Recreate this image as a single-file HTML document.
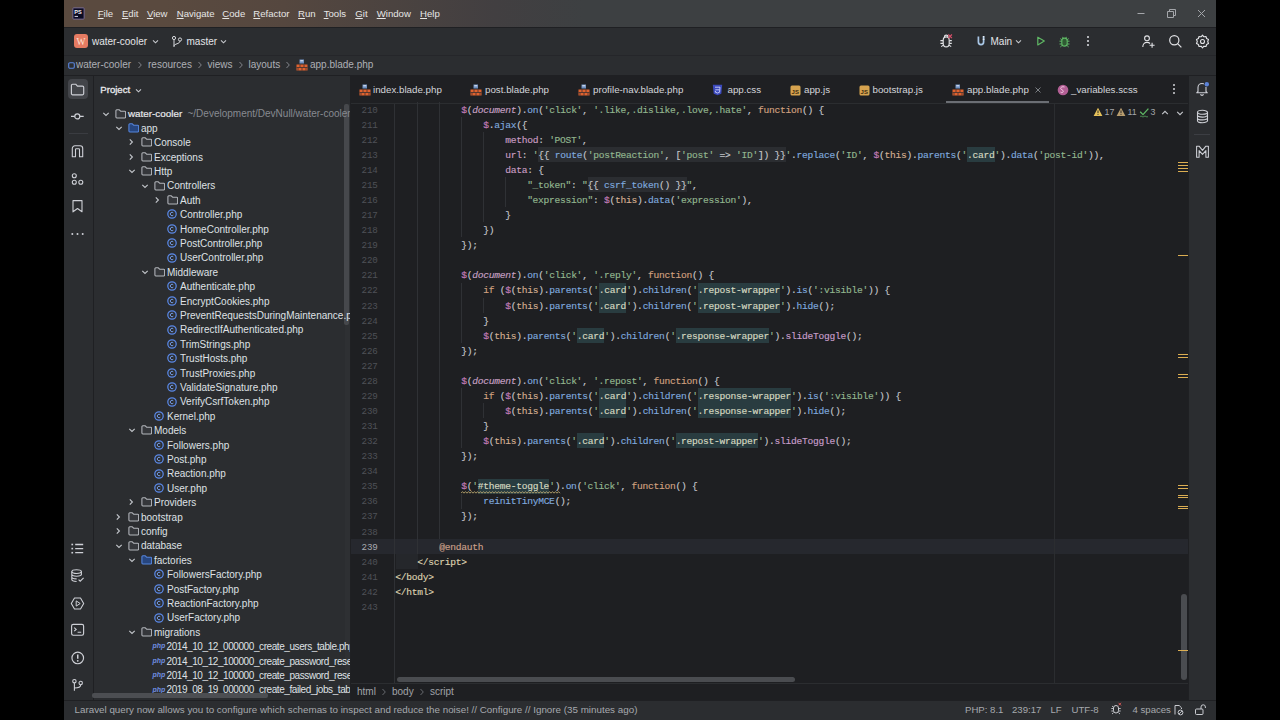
<!DOCTYPE html><html><head><meta charset="utf-8"><style>
html,body{margin:0;padding:0;background:#000;}
body{width:1280px;height:720px;position:relative;overflow:hidden;font-family:"Liberation Sans", sans-serif;}
.m{font-family:"Liberation Mono", monospace;}
</style></head><body>
<div style="position:absolute;left:64px;top:0px;width:1152px;height:720px;background:#2b2d30;"></div>
<div style="position:absolute;left:64px;top:0;width:1152px;height:27px;background:linear-gradient(90deg,#5a4a3f 0px,#5a4a3f 100px,#55473f 220px,#4b4340 330px,#423f41 430px,#3d4042 520px,#3d4042 1152px);"></div>
<div style="position:absolute;left:64px;top:27px;width:1152px;height:1px;background:#1f2023;"></div>
<div style="position:absolute;left:64px;top:28px;width:1152px;height:27px;background:#2b2d30;"></div>
<div style="position:absolute;left:64px;top:55px;width:1152px;height:1px;background:#25262a;"></div>
<div style="position:absolute;left:64px;top:56px;width:1152px;height:20px;background:#2b2d30;"></div>
<div style="position:absolute;left:64px;top:75px;width:1152px;height:1px;background:#1f2023;"></div>
<svg style="position:absolute;left:71.5px;top:6.5px;" width="13" height="13" viewBox="0 0 13 13" fill="none"><rect x="0.9" y="0.9" width="11.2" height="11.2" rx="0.8" fill="#0c0b22" stroke="#7f73a3" stroke-width="0.85"/><text x="2.3" y="7" font-family="Liberation Sans" font-weight="bold" font-size="5.6" fill="#f2f0f8">PS</text><rect x="2.6" y="8.9" width="3.4" height="1" fill="#d8d6e6"/></svg>
<div style="position:absolute;left:97.7px;top:6.00px;height:16px;line-height:16px;font-size:9.6px;color:#e6e6e6;white-space:pre;"><span style="text-decoration:underline;text-underline-offset:0.8px;text-decoration-thickness:0.8px">F</span>ile</div>
<div style="position:absolute;left:121.9px;top:6.00px;height:16px;line-height:16px;font-size:9.6px;color:#e6e6e6;white-space:pre;"><span style="text-decoration:underline;text-underline-offset:0.8px;text-decoration-thickness:0.8px">E</span>dit</div>
<div style="position:absolute;left:146.9px;top:6.00px;height:16px;line-height:16px;font-size:9.6px;color:#e6e6e6;white-space:pre;"><span style="text-decoration:underline;text-underline-offset:0.8px;text-decoration-thickness:0.8px">V</span>iew</div>
<div style="position:absolute;left:176.7px;top:6.00px;height:16px;line-height:16px;font-size:9.6px;color:#e6e6e6;white-space:pre;"><span style="text-decoration:underline;text-underline-offset:0.8px;text-decoration-thickness:0.8px">N</span>avigate</div>
<div style="position:absolute;left:222.3px;top:6.00px;height:16px;line-height:16px;font-size:9.6px;color:#e6e6e6;white-space:pre;"><span style="text-decoration:underline;text-underline-offset:0.8px;text-decoration-thickness:0.8px">C</span>ode</div>
<div style="position:absolute;left:253.3px;top:6.00px;height:16px;line-height:16px;font-size:9.6px;color:#e6e6e6;white-space:pre;"><span style="text-decoration:underline;text-underline-offset:0.8px;text-decoration-thickness:0.8px">R</span>efactor</div>
<div style="position:absolute;left:298.1px;top:6.00px;height:16px;line-height:16px;font-size:9.6px;color:#e6e6e6;white-space:pre;"><span style="text-decoration:underline;text-underline-offset:0.8px;text-decoration-thickness:0.8px">R</span>un</div>
<div style="position:absolute;left:323.7px;top:6.00px;height:16px;line-height:16px;font-size:9.6px;color:#e6e6e6;white-space:pre;"><span style="text-decoration:underline;text-underline-offset:0.8px;text-decoration-thickness:0.8px">T</span>ools</div>
<div style="position:absolute;left:355.3px;top:6.00px;height:16px;line-height:16px;font-size:9.6px;color:#e6e6e6;white-space:pre;"><span style="text-decoration:underline;text-underline-offset:0.8px;text-decoration-thickness:0.8px">G</span>it</div>
<div style="position:absolute;left:376.7px;top:6.00px;height:16px;line-height:16px;font-size:9.6px;color:#e6e6e6;white-space:pre;"><span style="text-decoration:underline;text-underline-offset:0.8px;text-decoration-thickness:0.8px">W</span>indow</div>
<div style="position:absolute;left:420.1px;top:6.00px;height:16px;line-height:16px;font-size:9.6px;color:#e6e6e6;white-space:pre;"><span style="text-decoration:underline;text-underline-offset:0.8px;text-decoration-thickness:0.8px">H</span>elp</div>
<svg style="position:absolute;left:1134px;top:6px;" width="14" height="14" viewBox="0 0 14 14" fill="none"><path d="M3.5 7.5h7" stroke="#a4a6aa" stroke-width="1"/></svg>
<svg style="position:absolute;left:1164px;top:6px;" width="14" height="14" viewBox="0 0 14 14" fill="none"><path d="M3.5 5.5h6v6h-6z" stroke="#a4a6aa" stroke-width="1"/><path d="M5.5 5.5v-2h6v6h-2" stroke="#a4a6aa" stroke-width="1"/></svg>
<svg style="position:absolute;left:1195px;top:6px;" width="14" height="14" viewBox="0 0 14 14" fill="none"><path d="M3 4l7 7M10 4l-7 7" stroke="#a4a6aa" stroke-width="1"/></svg>
<svg style="position:absolute;left:74px;top:34px;" width="14" height="14" viewBox="0 0 14 14" fill="none"><rect x="0" y="0" width="14" height="14" rx="3" fill="#e57b62"/><text x="7" y="10.6" text-anchor="middle" font-family="Liberation Serif" font-size="9.5" fill="#fbe0d2">W</text></svg>
<div style="position:absolute;left:92px;top:33.50px;height:16px;line-height:16px;font-size:10px;color:#e4e5e8;white-space:pre;">water-cooler</div>
<svg style="position:absolute;left:151px;top:37px;" width="9" height="9" viewBox="0 0 9 9" fill="none"><path d="M2 3.4l2.5 2.4 2.5-2.4" stroke="#c6c8cd" stroke-width="1.1"/></svg>
<svg style="position:absolute;left:171px;top:35px;" width="12" height="13" viewBox="0 0 12 13" fill="none"><circle cx="3" cy="3" r="1.6" stroke="#d6d8dc" stroke-width="1"/><circle cx="9" cy="4.5" r="1.6" stroke="#d6d8dc" stroke-width="1"/><path d="M3 4.6v7.4M9 6.1c0 3-6 2.5-6 5" stroke="#d6d8dc" stroke-width="1"/></svg>
<div style="position:absolute;left:186.5px;top:33.50px;height:16px;line-height:16px;font-size:10px;color:#e4e5e8;white-space:pre;">master</div>
<svg style="position:absolute;left:219px;top:37px;" width="9" height="9" viewBox="0 0 9 9" fill="none"><path d="M2 3.4l2.5 2.4 2.5-2.4" stroke="#c6c8cd" stroke-width="1.1"/></svg>
<svg style="position:absolute;left:938px;top:33px;" width="16" height="16" viewBox="0 0 16 16" fill="none"><path d="M5.2 7.2a3 3.4 0 0 1 6 0v3.3a3 3.4 0 0 1-6 0z" stroke="#e2e3e6" stroke-width="1.15"/><path d="M6.4 3.9a1.8 1.8 0 0 1 3.6 0" stroke="#e2e3e6" stroke-width="1.1"/><path d="M2.4 7.6h2.6M2.4 10.4h2.6M11.4 7.6h2.4M11.4 10.4h2.4M3.2 13.6l2.2-1.5M13.2 13.6l-2.2-1.5" stroke="#e2e3e6" stroke-width="1.1"/><path d="M10.3 1.5l3.6 3.6M13.9 1.5l-3.6 3.6" stroke="#d9506a" stroke-width="1.2"/></svg>
<svg style="position:absolute;left:975px;top:35px;" width="12" height="13" viewBox="0 0 12 13" fill="none"><path d="M3.4 1.5v5.6a2.6 2.6 0 0 0 5.2 0v-5.6" stroke="#a9c7e6" stroke-width="1.7"/><rect x="7.8" y="1" width="1.6" height="1.4" fill="#e6eef6"/><rect x="7.8" y="3.6" width="1.6" height="1.4" fill="#e6eef6"/></svg>
<div style="position:absolute;left:990.5px;top:33.50px;height:16px;line-height:16px;font-size:10px;color:#e4e5e8;white-space:pre;">Main</div>
<svg style="position:absolute;left:1014px;top:37px;" width="9" height="9" viewBox="0 0 9 9" fill="none"><path d="M2 3.4l2.5 2.4 2.5-2.4" stroke="#c6c8cd" stroke-width="1.1"/></svg>
<svg style="position:absolute;left:1035px;top:35px;" width="12" height="12" viewBox="0 0 12 12" fill="none"><path d="M2.8 2.2v7.8l6.5-3.9z" stroke="#5fb865" stroke-width="1.2" stroke-linejoin="round"/></svg>
<svg style="position:absolute;left:1058px;top:34px;" width="13" height="14" viewBox="0 0 13 14" fill="none"><path d="M3.8 6.8a2.7 2.7 0 0 1 5.4 0v2.6a2.7 2.7 0 0 1-5.4 0z" fill="#2f5a33" stroke="#5fb865" stroke-width="1.1"/><path d="M1.5 7.2h2.3M1.5 10h2.3M9.2 7.2h2.3M9.2 10h2.3M2.3 4.6l1.6 1.4M2.3 13l1.6-1.4M10.7 13l-1.6-1.4M10.7 4.6l-1.6 1.4M5.2 4.2l-.6-1.3M7.8 4.2l.6-1.3" stroke="#5fb865" stroke-width="1"/></svg>
<svg style="position:absolute;left:1084px;top:34px;" width="8" height="14" viewBox="0 0 8 14" fill="none"><circle cx="4" cy="3" r="1" fill="#dfe1e5"/><circle cx="4" cy="7" r="1" fill="#dfe1e5"/><circle cx="4" cy="11" r="1" fill="#dfe1e5"/></svg>
<svg style="position:absolute;left:1141px;top:34px;" width="15" height="15" viewBox="0 0 15 15" fill="none"><circle cx="6" cy="4.3" r="2.4" stroke="#e2e3e6" stroke-width="1.1"/><path d="M1.8 13c0-3 1.8-4.6 4.2-4.6 1.3 0 2.3.4 3 1.1" stroke="#e2e3e6" stroke-width="1.1"/><path d="M8.6 11.2h5M11.1 8.7v5" stroke="#e2e3e6" stroke-width="1.1"/></svg>
<svg style="position:absolute;left:1168px;top:34px;" width="15" height="15" viewBox="0 0 15 15" fill="none"><circle cx="6.3" cy="6.3" r="4.6" stroke="#e2e3e6" stroke-width="1.2"/><path d="M9.6 9.6l3.8 3.8" stroke="#e2e3e6" stroke-width="1.2"/></svg>
<svg style="position:absolute;left:1195px;top:34px;" width="15" height="15" viewBox="0 0 15 15" fill="none"><path d="M7.5 1.2l1.4 1.6 2.1-.3.6 2 1.9 1-.8 2 .8 2-1.9 1-.6 2-2.1-.3-1.4 1.6-1.4-1.6-2.1.3-.6-2-1.9-1 .8-2-.8-2 1.9-1 .6-2 2.1.3z" stroke="#e2e3e6" stroke-width="1.1" stroke-linejoin="round"/><circle cx="7.5" cy="7.5" r="2" stroke="#e2e3e6" stroke-width="1.1"/></svg>
<svg style="position:absolute;left:68px;top:62px;" width="7" height="7" viewBox="0 0 7 7" fill="none"><rect x="0.7" y="0.7" width="5.6" height="5.6" rx="1.2" stroke="#5a86e0" stroke-width="1.1"/></svg>
<div style="position:absolute;left:76px;top:57.00px;height:16px;line-height:16px;font-size:10px;color:#aeb0b6;white-space:pre;">water-cooler</div>
<svg style="position:absolute;left:137px;top:61px;" width="6" height="8" viewBox="0 0 6 8" fill="none"><path d="M1.5 1l2.8 3-2.8 3" stroke="#8c8f95" stroke-width="0.9"/></svg>
<div style="position:absolute;left:148px;top:57.00px;height:16px;line-height:16px;font-size:10px;color:#aeb0b6;white-space:pre;">resources</div>
<svg style="position:absolute;left:197px;top:61px;" width="6" height="8" viewBox="0 0 6 8" fill="none"><path d="M1.5 1l2.8 3-2.8 3" stroke="#8c8f95" stroke-width="0.9"/></svg>
<div style="position:absolute;left:207.5px;top:57.00px;height:16px;line-height:16px;font-size:10px;color:#aeb0b6;white-space:pre;">views</div>
<svg style="position:absolute;left:238px;top:61px;" width="6" height="8" viewBox="0 0 6 8" fill="none"><path d="M1.5 1l2.8 3-2.8 3" stroke="#8c8f95" stroke-width="0.9"/></svg>
<div style="position:absolute;left:248.5px;top:57.00px;height:16px;line-height:16px;font-size:10px;color:#aeb0b6;white-space:pre;">layouts</div>
<svg style="position:absolute;left:285px;top:61px;" width="6" height="8" viewBox="0 0 6 8" fill="none"><path d="M1.5 1l2.8 3-2.8 3" stroke="#8c8f95" stroke-width="0.9"/></svg>
<svg style="position:absolute;left:296px;top:59px;" width="12" height="12" viewBox="0 0 12 12" fill="none"><rect x="3.5" y="0.5" width="4.5" height="4" fill="#6f8fc0"/><rect x="4.3" y="1.3" width="2.9" height="1" fill="#e8eef8"/><path d="M0.5 5.5h11v6h-11z" fill="#e0622e"/><path d="M0.5 8.5h11M4 5.5v3M8 5.5v3M2 8.5v3M6 8.5v3M10 8.5v3" stroke="#2b2d30" stroke-width="0.7"/></svg>
<div style="position:absolute;left:310px;top:57.00px;height:16px;line-height:16px;font-size:10px;color:#aeb0b6;white-space:pre;">app.blade.php</div>
<div style="position:absolute;left:64px;top:76px;width:29px;height:624px;background:#2b2d30;"></div>
<div style="position:absolute;left:93px;top:76px;width:1px;height:624px;background:#1f2023;"></div>
<div style="position:absolute;left:67.8px;top:79.3px;width:20.4px;height:20px;background:#43454a;border-radius:4px;"></div>
<svg style="position:absolute;left:70px;top:83px;" width="15" height="13" viewBox="0 0 15 13" fill="none"><path d="M1.4 2.4a1.2 1.2 0 0 1 1.2-1.2h3.1l1.7 1.9h5.1a1.2 1.2 0 0 1 1.2 1.2v6.3a1.2 1.2 0 0 1-1.2 1.2H2.6a1.2 1.2 0 0 1-1.2-1.2z" stroke="#ced0d6" stroke-width="1.15" stroke-linejoin="round"/></svg>
<svg style="position:absolute;left:70px;top:109px;" width="15" height="15" viewBox="0 0 15 15" fill="none"><circle cx="7.3" cy="7.4" r="2.5" stroke="#ced0d6" stroke-width="1.2"/><path d="M1 7.4h3.8M9.8 7.4h3.9" stroke="#ced0d6" stroke-width="1.1"/></svg>
<div style="position:absolute;left:69px;top:133px;width:19px;height:1px;background:#3a3c41;"></div>
<svg style="position:absolute;left:70px;top:144px;" width="15" height="15" viewBox="0 0 15 15" fill="none"><path d="M2.3 12.8V4.4a2.6 2.6 0 0 1 2.6-2.6h5.2a2.6 2.6 0 0 1 2.6 2.6v8.4h-3.2V5.6a.8.8 0 0 0-.8-.8H6.3a.8.8 0 0 0-.8.8v7.2z" stroke="#ced0d6" stroke-width="1.1" stroke-linejoin="round"/></svg>
<svg style="position:absolute;left:70px;top:172px;" width="15" height="15" viewBox="0 0 15 15" fill="none"><circle cx="4.3" cy="3.8" r="2" stroke="#ced0d6" stroke-width="1.1"/><circle cx="4.3" cy="10.3" r="2" stroke="#ced0d6" stroke-width="1.1"/><circle cx="10.8" cy="10.3" r="2" stroke="#ced0d6" stroke-width="1.1"/></svg>
<svg style="position:absolute;left:70px;top:199px;" width="15" height="15" viewBox="0 0 15 15" fill="none"><path d="M3 1.6h9v11.2l-4.5-3.3-4.5 3.3z" stroke="#ced0d6" stroke-width="1.1" stroke-linejoin="round"/></svg>
<svg style="position:absolute;left:70px;top:227px;" width="15" height="15" viewBox="0 0 15 15" fill="none"><circle cx="2.3" cy="7" r="1" fill="#ced0d6"/><circle cx="7.5" cy="7" r="1" fill="#ced0d6"/><circle cx="12.7" cy="7" r="1" fill="#ced0d6"/></svg>
<svg style="position:absolute;left:70px;top:541px;" width="15" height="15" viewBox="0 0 15 15" fill="none"><path d="M5.2 3.5h8M5.2 7.6h8M5.2 11.7h8" stroke="#ced0d6" stroke-width="1.3"/><rect x="1.4" y="2.7" width="1.7" height="1.6" fill="#ced0d6"/><rect x="1.4" y="6.8" width="1.7" height="1.6" fill="#ced0d6"/><rect x="1.4" y="10.9" width="1.7" height="1.6" fill="#ced0d6"/></svg>
<svg style="position:absolute;left:70px;top:568px;" width="15" height="15" viewBox="0 0 15 15" fill="none"><ellipse cx="6.6" cy="3.6" rx="4.8" ry="1.9" stroke="#ced0d6" stroke-width="1.1"/><path d="M1.8 3.6v8c0 1 2 1.9 4.8 1.9M11.4 3.6v3.6M1.8 6.3c0 1 2 1.9 4.8 1.9s4.8-.9 4.8-1.9M1.8 9c0 1 2 1.9 4.8 1.9" stroke="#ced0d6" stroke-width="1.1"/><path d="M8.6 11.6l1.6 1.6 3.4-3.4" stroke="#ced0d6" stroke-width="1.1"/></svg>
<svg style="position:absolute;left:70px;top:596px;" width="15" height="15" viewBox="0 0 15 15" fill="none"><path d="M1.3 7.5l3.2-5.5h6l3.2 5.5-3.2 5.5h-6z" stroke="#ced0d6" stroke-width="1.1" stroke-linejoin="round"/><path d="M6.2 4.9v5.2l4-2.6z" stroke="#ced0d6" stroke-width="1" stroke-linejoin="round"/></svg>
<svg style="position:absolute;left:70px;top:622px;" width="15" height="15" viewBox="0 0 15 15" fill="none"><rect x="1.6" y="2.4" width="12" height="10.8" rx="1.6" stroke="#ced0d6" stroke-width="1.15"/><path d="M4.2 5.6l2 1.8-2 1.8M7.6 10.2h3.6" stroke="#ced0d6" stroke-width="1.1"/></svg>
<svg style="position:absolute;left:70px;top:650px;" width="15" height="16" viewBox="0 0 15 16" fill="none"><circle cx="7.75" cy="7.9" r="5.8" stroke="#ced0d6" stroke-width="1.15"/><path d="M7.75 4.6v4.1" stroke="#ced0d6" stroke-width="1.5"/><circle cx="7.75" cy="10.8" r="0.9" fill="#ced0d6"/></svg>
<svg style="position:absolute;left:70px;top:677px;" width="15" height="15" viewBox="0 0 15 15" fill="none"><circle cx="4.4" cy="4.2" r="1.7" stroke="#ced0d6" stroke-width="1.1"/><circle cx="10.7" cy="6" r="1.7" stroke="#ced0d6" stroke-width="1.1"/><path d="M4.4 5.9v7.9M10.7 7.7c0 2.6-2.5 3.3-6.3 3.3" stroke="#ced0d6" stroke-width="1.1"/></svg>
<div style="position:absolute;left:94px;top:76px;width:256px;height:624px;background:#2b2d30;"></div>
<div style="position:absolute;left:100.3px;top:81.50px;height:16px;line-height:16px;font-size:9.6px;color:#e8e9ec;white-space:pre;-webkit-text-stroke:0.3px #e8e9ec;">Project</div>
<svg style="position:absolute;left:133.5px;top:85.5px;" width="9" height="9" viewBox="0 0 9 9" fill="none"><path d="M2 3.4l2.5 2.4 2.5-2.4" stroke="#c6c8cd" stroke-width="1.1"/></svg>
<div style="position:absolute;left:345px;top:104px;width:5px;height:590px;background:#2e3033;"></div>
<div style="position:absolute;left:344px;top:104px;width:5px;height:221px;background:#46484c;border-radius:2px;"></div>
<div style="position:absolute;left:94px;top:100px;width:256px;height:600px;overflow:hidden;">
<svg style="position:absolute;left:7.5px;top:9.5px;" width="8" height="8" viewBox="0 0 8 8" fill="none"><path d="M1.3 2.9l2.7 2.6 2.7-2.6" stroke="#c2c5ca" stroke-width="1.15"/></svg>
<svg style="position:absolute;left:21px;top:8.5px;" width="11" height="10" viewBox="0 0 11 10" fill="none"><path d="M0.9 1.7a.9.9 0 0 1 .9-.9h2.5l1.3 1.4h4.1a.9.9 0 0 1 .9.9v4.9a.9.9 0 0 1-.9.9H1.8a.9.9 0 0 1-.9-.9z" fill="#35373b" stroke="#b4b7bc" stroke-width="1.05" stroke-linejoin="round"/></svg>
<div style="position:absolute;left:34px;top:6.30px;height:16px;line-height:16px;font-size:9.85px;color:#e8e9ec;white-space:pre;-webkit-text-stroke:0.2px #e8e9ec;">water-cooler</div>
<div style="position:absolute;left:93.5px;top:6.30px;height:16px;line-height:16px;font-size:10px;color:#878a90;white-space:pre;">~/Development/DevNull/water-cooler</div>
<svg style="position:absolute;left:20.5px;top:23.900000000000006px;" width="8" height="8" viewBox="0 0 8 8" fill="none"><path d="M1.3 2.9l2.7 2.6 2.7-2.6" stroke="#c2c5ca" stroke-width="1.15"/></svg>
<svg style="position:absolute;left:34px;top:22.900000000000006px;" width="11" height="10" viewBox="0 0 11 10" fill="none"><path d="M0.9 1.7a.9.9 0 0 1 .9-.9h2.5l1.3 1.4h4.1a.9.9 0 0 1 .9.9v4.9a.9.9 0 0 1-.9.9H1.8a.9.9 0 0 1-.9-.9z" fill="#27467f" stroke="#5585dc" stroke-width="1.05" stroke-linejoin="round"/></svg>
<div style="position:absolute;left:47px;top:20.70px;height:16px;line-height:16px;font-size:10px;color:#dfe1e5;white-space:pre;">app</div>
<svg style="position:absolute;left:33.2px;top:38.30000000000001px;" width="8" height="8" viewBox="0 0 8 8" fill="none"><path d="M2.8 1.3l2.6 2.7-2.6 2.7" stroke="#c2c5ca" stroke-width="1.15"/></svg>
<svg style="position:absolute;left:47px;top:37.30000000000001px;" width="11" height="10" viewBox="0 0 11 10" fill="none"><path d="M0.9 1.7a.9.9 0 0 1 .9-.9h2.5l1.3 1.4h4.1a.9.9 0 0 1 .9.9v4.9a.9.9 0 0 1-.9.9H1.8a.9.9 0 0 1-.9-.9z" fill="#35373b" stroke="#b4b7bc" stroke-width="1.05" stroke-linejoin="round"/></svg>
<div style="position:absolute;left:60px;top:35.10px;height:16px;line-height:16px;font-size:10px;color:#dfe1e5;white-space:pre;">Console</div>
<svg style="position:absolute;left:33.2px;top:52.69999999999999px;" width="8" height="8" viewBox="0 0 8 8" fill="none"><path d="M2.8 1.3l2.6 2.7-2.6 2.7" stroke="#c2c5ca" stroke-width="1.15"/></svg>
<svg style="position:absolute;left:47px;top:51.69999999999999px;" width="11" height="10" viewBox="0 0 11 10" fill="none"><path d="M0.9 1.7a.9.9 0 0 1 .9-.9h2.5l1.3 1.4h4.1a.9.9 0 0 1 .9.9v4.9a.9.9 0 0 1-.9.9H1.8a.9.9 0 0 1-.9-.9z" fill="#35373b" stroke="#b4b7bc" stroke-width="1.05" stroke-linejoin="round"/></svg>
<div style="position:absolute;left:60px;top:49.50px;height:16px;line-height:16px;font-size:10px;color:#dfe1e5;white-space:pre;">Exceptions</div>
<svg style="position:absolute;left:33.5px;top:67.1px;" width="8" height="8" viewBox="0 0 8 8" fill="none"><path d="M1.3 2.9l2.7 2.6 2.7-2.6" stroke="#c2c5ca" stroke-width="1.15"/></svg>
<svg style="position:absolute;left:47px;top:66.1px;" width="11" height="10" viewBox="0 0 11 10" fill="none"><path d="M0.9 1.7a.9.9 0 0 1 .9-.9h2.5l1.3 1.4h4.1a.9.9 0 0 1 .9.9v4.9a.9.9 0 0 1-.9.9H1.8a.9.9 0 0 1-.9-.9z" fill="#35373b" stroke="#b4b7bc" stroke-width="1.05" stroke-linejoin="round"/></svg>
<div style="position:absolute;left:60px;top:63.90px;height:16px;line-height:16px;font-size:10px;color:#dfe1e5;white-space:pre;">Http</div>
<svg style="position:absolute;left:46.5px;top:81.5px;" width="8" height="8" viewBox="0 0 8 8" fill="none"><path d="M1.3 2.9l2.7 2.6 2.7-2.6" stroke="#c2c5ca" stroke-width="1.15"/></svg>
<svg style="position:absolute;left:60px;top:80.5px;" width="11" height="10" viewBox="0 0 11 10" fill="none"><path d="M0.9 1.7a.9.9 0 0 1 .9-.9h2.5l1.3 1.4h4.1a.9.9 0 0 1 .9.9v4.9a.9.9 0 0 1-.9.9H1.8a.9.9 0 0 1-.9-.9z" fill="#35373b" stroke="#b4b7bc" stroke-width="1.05" stroke-linejoin="round"/></svg>
<div style="position:absolute;left:73px;top:78.30px;height:16px;line-height:16px;font-size:10px;color:#dfe1e5;white-space:pre;">Controllers</div>
<svg style="position:absolute;left:59.2px;top:95.9px;" width="8" height="8" viewBox="0 0 8 8" fill="none"><path d="M2.8 1.3l2.6 2.7-2.6 2.7" stroke="#c2c5ca" stroke-width="1.15"/></svg>
<svg style="position:absolute;left:73px;top:94.9px;" width="11" height="10" viewBox="0 0 11 10" fill="none"><path d="M0.9 1.7a.9.9 0 0 1 .9-.9h2.5l1.3 1.4h4.1a.9.9 0 0 1 .9.9v4.9a.9.9 0 0 1-.9.9H1.8a.9.9 0 0 1-.9-.9z" fill="#35373b" stroke="#b4b7bc" stroke-width="1.05" stroke-linejoin="round"/></svg>
<div style="position:absolute;left:86px;top:92.70px;height:16px;line-height:16px;font-size:10px;color:#dfe1e5;white-space:pre;">Auth</div>
<svg style="position:absolute;left:73px;top:109.30000000000001px;" width="10" height="10" viewBox="0 0 10 10" fill="none"><circle cx="5" cy="5" r="4.2" stroke="#5a88e6" stroke-width="1.25"/><path d="M6.3 3.8a1.75 1.75 0 1 0 0 2.4" stroke="#7aa2ee" stroke-width="0.95"/></svg>
<div style="position:absolute;left:86px;top:107.10px;height:16px;line-height:16px;font-size:10px;color:#dfe1e5;white-space:pre;">Controller.php</div>
<svg style="position:absolute;left:73px;top:123.69999999999999px;" width="10" height="10" viewBox="0 0 10 10" fill="none"><circle cx="5" cy="5" r="4.2" stroke="#5a88e6" stroke-width="1.25"/><path d="M6.3 3.8a1.75 1.75 0 1 0 0 2.4" stroke="#7aa2ee" stroke-width="0.95"/></svg>
<div style="position:absolute;left:86px;top:121.50px;height:16px;line-height:16px;font-size:10px;color:#dfe1e5;white-space:pre;">HomeController.php</div>
<svg style="position:absolute;left:73px;top:138.1px;" width="10" height="10" viewBox="0 0 10 10" fill="none"><circle cx="5" cy="5" r="4.2" stroke="#5a88e6" stroke-width="1.25"/><path d="M6.3 3.8a1.75 1.75 0 1 0 0 2.4" stroke="#7aa2ee" stroke-width="0.95"/></svg>
<div style="position:absolute;left:86px;top:135.90px;height:16px;line-height:16px;font-size:10px;color:#dfe1e5;white-space:pre;">PostController.php</div>
<svg style="position:absolute;left:73px;top:152.5px;" width="10" height="10" viewBox="0 0 10 10" fill="none"><circle cx="5" cy="5" r="4.2" stroke="#5a88e6" stroke-width="1.25"/><path d="M6.3 3.8a1.75 1.75 0 1 0 0 2.4" stroke="#7aa2ee" stroke-width="0.95"/></svg>
<div style="position:absolute;left:86px;top:150.30px;height:16px;line-height:16px;font-size:10px;color:#dfe1e5;white-space:pre;">UserController.php</div>
<svg style="position:absolute;left:46.5px;top:167.89999999999998px;" width="8" height="8" viewBox="0 0 8 8" fill="none"><path d="M1.3 2.9l2.7 2.6 2.7-2.6" stroke="#c2c5ca" stroke-width="1.15"/></svg>
<svg style="position:absolute;left:60px;top:166.89999999999998px;" width="11" height="10" viewBox="0 0 11 10" fill="none"><path d="M0.9 1.7a.9.9 0 0 1 .9-.9h2.5l1.3 1.4h4.1a.9.9 0 0 1 .9.9v4.9a.9.9 0 0 1-.9.9H1.8a.9.9 0 0 1-.9-.9z" fill="#35373b" stroke="#b4b7bc" stroke-width="1.05" stroke-linejoin="round"/></svg>
<div style="position:absolute;left:73px;top:164.70px;height:16px;line-height:16px;font-size:10px;color:#dfe1e5;white-space:pre;">Middleware</div>
<svg style="position:absolute;left:73px;top:181.3px;" width="10" height="10" viewBox="0 0 10 10" fill="none"><circle cx="5" cy="5" r="4.2" stroke="#5a88e6" stroke-width="1.25"/><path d="M6.3 3.8a1.75 1.75 0 1 0 0 2.4" stroke="#7aa2ee" stroke-width="0.95"/></svg>
<div style="position:absolute;left:86px;top:179.10px;height:16px;line-height:16px;font-size:10px;color:#dfe1e5;white-space:pre;">Authenticate.php</div>
<svg style="position:absolute;left:73px;top:195.70000000000005px;" width="10" height="10" viewBox="0 0 10 10" fill="none"><circle cx="5" cy="5" r="4.2" stroke="#5a88e6" stroke-width="1.25"/><path d="M6.3 3.8a1.75 1.75 0 1 0 0 2.4" stroke="#7aa2ee" stroke-width="0.95"/></svg>
<div style="position:absolute;left:86px;top:193.50px;height:16px;line-height:16px;font-size:10px;color:#dfe1e5;white-space:pre;">EncryptCookies.php</div>
<svg style="position:absolute;left:73px;top:210.10000000000002px;" width="10" height="10" viewBox="0 0 10 10" fill="none"><circle cx="5" cy="5" r="4.2" stroke="#5a88e6" stroke-width="1.25"/><path d="M6.3 3.8a1.75 1.75 0 1 0 0 2.4" stroke="#7aa2ee" stroke-width="0.95"/></svg>
<div style="position:absolute;left:86px;top:207.90px;height:16px;line-height:16px;font-size:10px;color:#dfe1e5;white-space:pre;">PreventRequestsDuringMaintenance.php</div>
<svg style="position:absolute;left:73px;top:224.5px;" width="10" height="10" viewBox="0 0 10 10" fill="none"><circle cx="5" cy="5" r="4.2" stroke="#5a88e6" stroke-width="1.25"/><path d="M6.3 3.8a1.75 1.75 0 1 0 0 2.4" stroke="#7aa2ee" stroke-width="0.95"/></svg>
<div style="position:absolute;left:86px;top:222.30px;height:16px;line-height:16px;font-size:10px;color:#dfe1e5;white-space:pre;">RedirectIfAuthenticated.php</div>
<svg style="position:absolute;left:73px;top:238.89999999999998px;" width="10" height="10" viewBox="0 0 10 10" fill="none"><circle cx="5" cy="5" r="4.2" stroke="#5a88e6" stroke-width="1.25"/><path d="M6.3 3.8a1.75 1.75 0 1 0 0 2.4" stroke="#7aa2ee" stroke-width="0.95"/></svg>
<div style="position:absolute;left:86px;top:236.70px;height:16px;line-height:16px;font-size:10px;color:#dfe1e5;white-space:pre;">TrimStrings.php</div>
<svg style="position:absolute;left:73px;top:253.3px;" width="10" height="10" viewBox="0 0 10 10" fill="none"><circle cx="5" cy="5" r="4.2" stroke="#5a88e6" stroke-width="1.25"/><path d="M6.3 3.8a1.75 1.75 0 1 0 0 2.4" stroke="#7aa2ee" stroke-width="0.95"/></svg>
<div style="position:absolute;left:86px;top:251.10px;height:16px;line-height:16px;font-size:10px;color:#dfe1e5;white-space:pre;">TrustHosts.php</div>
<svg style="position:absolute;left:73px;top:267.7px;" width="10" height="10" viewBox="0 0 10 10" fill="none"><circle cx="5" cy="5" r="4.2" stroke="#5a88e6" stroke-width="1.25"/><path d="M6.3 3.8a1.75 1.75 0 1 0 0 2.4" stroke="#7aa2ee" stroke-width="0.95"/></svg>
<div style="position:absolute;left:86px;top:265.50px;height:16px;line-height:16px;font-size:10px;color:#dfe1e5;white-space:pre;">TrustProxies.php</div>
<svg style="position:absolute;left:73px;top:282.1px;" width="10" height="10" viewBox="0 0 10 10" fill="none"><circle cx="5" cy="5" r="4.2" stroke="#5a88e6" stroke-width="1.25"/><path d="M6.3 3.8a1.75 1.75 0 1 0 0 2.4" stroke="#7aa2ee" stroke-width="0.95"/></svg>
<div style="position:absolute;left:86px;top:279.90px;height:16px;line-height:16px;font-size:10px;color:#dfe1e5;white-space:pre;">ValidateSignature.php</div>
<svg style="position:absolute;left:73px;top:296.5px;" width="10" height="10" viewBox="0 0 10 10" fill="none"><circle cx="5" cy="5" r="4.2" stroke="#5a88e6" stroke-width="1.25"/><path d="M6.3 3.8a1.75 1.75 0 1 0 0 2.4" stroke="#7aa2ee" stroke-width="0.95"/></svg>
<div style="position:absolute;left:86px;top:294.30px;height:16px;line-height:16px;font-size:10px;color:#dfe1e5;white-space:pre;">VerifyCsrfToken.php</div>
<svg style="position:absolute;left:60px;top:310.90000000000003px;" width="10" height="10" viewBox="0 0 10 10" fill="none"><circle cx="5" cy="5" r="4.2" stroke="#5a88e6" stroke-width="1.25"/><path d="M6.3 3.8a1.75 1.75 0 1 0 0 2.4" stroke="#7aa2ee" stroke-width="0.95"/></svg>
<div style="position:absolute;left:73px;top:308.70px;height:16px;line-height:16px;font-size:10px;color:#dfe1e5;white-space:pre;">Kernel.php</div>
<svg style="position:absolute;left:33.5px;top:326.3px;" width="8" height="8" viewBox="0 0 8 8" fill="none"><path d="M1.3 2.9l2.7 2.6 2.7-2.6" stroke="#c2c5ca" stroke-width="1.15"/></svg>
<svg style="position:absolute;left:47px;top:325.3px;" width="11" height="10" viewBox="0 0 11 10" fill="none"><path d="M0.9 1.7a.9.9 0 0 1 .9-.9h2.5l1.3 1.4h4.1a.9.9 0 0 1 .9.9v4.9a.9.9 0 0 1-.9.9H1.8a.9.9 0 0 1-.9-.9z" fill="#35373b" stroke="#b4b7bc" stroke-width="1.05" stroke-linejoin="round"/></svg>
<div style="position:absolute;left:60px;top:323.10px;height:16px;line-height:16px;font-size:10px;color:#dfe1e5;white-space:pre;">Models</div>
<svg style="position:absolute;left:60px;top:339.7px;" width="10" height="10" viewBox="0 0 10 10" fill="none"><circle cx="5" cy="5" r="4.2" stroke="#5a88e6" stroke-width="1.25"/><path d="M6.3 3.8a1.75 1.75 0 1 0 0 2.4" stroke="#7aa2ee" stroke-width="0.95"/></svg>
<div style="position:absolute;left:73px;top:337.50px;height:16px;line-height:16px;font-size:10px;color:#dfe1e5;white-space:pre;">Followers.php</div>
<svg style="position:absolute;left:60px;top:354.1px;" width="10" height="10" viewBox="0 0 10 10" fill="none"><circle cx="5" cy="5" r="4.2" stroke="#5a88e6" stroke-width="1.25"/><path d="M6.3 3.8a1.75 1.75 0 1 0 0 2.4" stroke="#7aa2ee" stroke-width="0.95"/></svg>
<div style="position:absolute;left:73px;top:351.90px;height:16px;line-height:16px;font-size:10px;color:#dfe1e5;white-space:pre;">Post.php</div>
<svg style="position:absolute;left:60px;top:368.5px;" width="10" height="10" viewBox="0 0 10 10" fill="none"><circle cx="5" cy="5" r="4.2" stroke="#5a88e6" stroke-width="1.25"/><path d="M6.3 3.8a1.75 1.75 0 1 0 0 2.4" stroke="#7aa2ee" stroke-width="0.95"/></svg>
<div style="position:absolute;left:73px;top:366.30px;height:16px;line-height:16px;font-size:10px;color:#dfe1e5;white-space:pre;">Reaction.php</div>
<svg style="position:absolute;left:60px;top:382.90000000000003px;" width="10" height="10" viewBox="0 0 10 10" fill="none"><circle cx="5" cy="5" r="4.2" stroke="#5a88e6" stroke-width="1.25"/><path d="M6.3 3.8a1.75 1.75 0 1 0 0 2.4" stroke="#7aa2ee" stroke-width="0.95"/></svg>
<div style="position:absolute;left:73px;top:380.70px;height:16px;line-height:16px;font-size:10px;color:#dfe1e5;white-space:pre;">User.php</div>
<svg style="position:absolute;left:33.2px;top:398.3px;" width="8" height="8" viewBox="0 0 8 8" fill="none"><path d="M2.8 1.3l2.6 2.7-2.6 2.7" stroke="#c2c5ca" stroke-width="1.15"/></svg>
<svg style="position:absolute;left:47px;top:397.3px;" width="11" height="10" viewBox="0 0 11 10" fill="none"><path d="M0.9 1.7a.9.9 0 0 1 .9-.9h2.5l1.3 1.4h4.1a.9.9 0 0 1 .9.9v4.9a.9.9 0 0 1-.9.9H1.8a.9.9 0 0 1-.9-.9z" fill="#35373b" stroke="#b4b7bc" stroke-width="1.05" stroke-linejoin="round"/></svg>
<div style="position:absolute;left:60px;top:395.10px;height:16px;line-height:16px;font-size:10px;color:#dfe1e5;white-space:pre;">Providers</div>
<svg style="position:absolute;left:20.2px;top:412.70000000000005px;" width="8" height="8" viewBox="0 0 8 8" fill="none"><path d="M2.8 1.3l2.6 2.7-2.6 2.7" stroke="#c2c5ca" stroke-width="1.15"/></svg>
<svg style="position:absolute;left:34px;top:411.70000000000005px;" width="11" height="10" viewBox="0 0 11 10" fill="none"><path d="M0.9 1.7a.9.9 0 0 1 .9-.9h2.5l1.3 1.4h4.1a.9.9 0 0 1 .9.9v4.9a.9.9 0 0 1-.9.9H1.8a.9.9 0 0 1-.9-.9z" fill="#35373b" stroke="#b4b7bc" stroke-width="1.05" stroke-linejoin="round"/></svg>
<div style="position:absolute;left:47px;top:409.50px;height:16px;line-height:16px;font-size:10px;color:#dfe1e5;white-space:pre;">bootstrap</div>
<svg style="position:absolute;left:20.2px;top:427.1px;" width="8" height="8" viewBox="0 0 8 8" fill="none"><path d="M2.8 1.3l2.6 2.7-2.6 2.7" stroke="#c2c5ca" stroke-width="1.15"/></svg>
<svg style="position:absolute;left:34px;top:426.1px;" width="11" height="10" viewBox="0 0 11 10" fill="none"><path d="M0.9 1.7a.9.9 0 0 1 .9-.9h2.5l1.3 1.4h4.1a.9.9 0 0 1 .9.9v4.9a.9.9 0 0 1-.9.9H1.8a.9.9 0 0 1-.9-.9z" fill="#35373b" stroke="#b4b7bc" stroke-width="1.05" stroke-linejoin="round"/></svg>
<div style="position:absolute;left:47px;top:423.90px;height:16px;line-height:16px;font-size:10px;color:#dfe1e5;white-space:pre;">config</div>
<svg style="position:absolute;left:20.5px;top:441.5px;" width="8" height="8" viewBox="0 0 8 8" fill="none"><path d="M1.3 2.9l2.7 2.6 2.7-2.6" stroke="#c2c5ca" stroke-width="1.15"/></svg>
<svg style="position:absolute;left:34px;top:440.5px;" width="11" height="10" viewBox="0 0 11 10" fill="none"><path d="M0.9 1.7a.9.9 0 0 1 .9-.9h2.5l1.3 1.4h4.1a.9.9 0 0 1 .9.9v4.9a.9.9 0 0 1-.9.9H1.8a.9.9 0 0 1-.9-.9z" fill="#35373b" stroke="#b4b7bc" stroke-width="1.05" stroke-linejoin="round"/></svg>
<div style="position:absolute;left:47px;top:438.30px;height:16px;line-height:16px;font-size:10px;color:#dfe1e5;white-space:pre;">database</div>
<svg style="position:absolute;left:33.5px;top:455.9000000000001px;" width="8" height="8" viewBox="0 0 8 8" fill="none"><path d="M1.3 2.9l2.7 2.6 2.7-2.6" stroke="#c2c5ca" stroke-width="1.15"/></svg>
<svg style="position:absolute;left:47px;top:454.9000000000001px;" width="11" height="10" viewBox="0 0 11 10" fill="none"><path d="M0.9 1.7a.9.9 0 0 1 .9-.9h2.5l1.3 1.4h4.1a.9.9 0 0 1 .9.9v4.9a.9.9 0 0 1-.9.9H1.8a.9.9 0 0 1-.9-.9z" fill="#27467f" stroke="#5585dc" stroke-width="1.05" stroke-linejoin="round"/></svg>
<div style="position:absolute;left:60px;top:452.70px;height:16px;line-height:16px;font-size:10px;color:#dfe1e5;white-space:pre;">factories</div>
<svg style="position:absolute;left:60px;top:469.29999999999995px;" width="10" height="10" viewBox="0 0 10 10" fill="none"><circle cx="5" cy="5" r="4.2" stroke="#5a88e6" stroke-width="1.25"/><path d="M6.3 3.8a1.75 1.75 0 1 0 0 2.4" stroke="#7aa2ee" stroke-width="0.95"/></svg>
<div style="position:absolute;left:73px;top:467.10px;height:16px;line-height:16px;font-size:10px;color:#dfe1e5;white-space:pre;">FollowersFactory.php</div>
<svg style="position:absolute;left:60px;top:483.70000000000005px;" width="10" height="10" viewBox="0 0 10 10" fill="none"><circle cx="5" cy="5" r="4.2" stroke="#5a88e6" stroke-width="1.25"/><path d="M6.3 3.8a1.75 1.75 0 1 0 0 2.4" stroke="#7aa2ee" stroke-width="0.95"/></svg>
<div style="position:absolute;left:73px;top:481.50px;height:16px;line-height:16px;font-size:10px;color:#dfe1e5;white-space:pre;">PostFactory.php</div>
<svg style="position:absolute;left:60px;top:498.1px;" width="10" height="10" viewBox="0 0 10 10" fill="none"><circle cx="5" cy="5" r="4.2" stroke="#5a88e6" stroke-width="1.25"/><path d="M6.3 3.8a1.75 1.75 0 1 0 0 2.4" stroke="#7aa2ee" stroke-width="0.95"/></svg>
<div style="position:absolute;left:73px;top:495.90px;height:16px;line-height:16px;font-size:10px;color:#dfe1e5;white-space:pre;">ReactionFactory.php</div>
<svg style="position:absolute;left:60px;top:512.5px;" width="10" height="10" viewBox="0 0 10 10" fill="none"><circle cx="5" cy="5" r="4.2" stroke="#5a88e6" stroke-width="1.25"/><path d="M6.3 3.8a1.75 1.75 0 1 0 0 2.4" stroke="#7aa2ee" stroke-width="0.95"/></svg>
<div style="position:absolute;left:73px;top:510.30px;height:16px;line-height:16px;font-size:10px;color:#dfe1e5;white-space:pre;">UserFactory.php</div>
<svg style="position:absolute;left:33.5px;top:527.9px;" width="8" height="8" viewBox="0 0 8 8" fill="none"><path d="M1.3 2.9l2.7 2.6 2.7-2.6" stroke="#c2c5ca" stroke-width="1.15"/></svg>
<svg style="position:absolute;left:47px;top:526.9px;" width="11" height="10" viewBox="0 0 11 10" fill="none"><path d="M0.9 1.7a.9.9 0 0 1 .9-.9h2.5l1.3 1.4h4.1a.9.9 0 0 1 .9.9v4.9a.9.9 0 0 1-.9.9H1.8a.9.9 0 0 1-.9-.9z" fill="#35373b" stroke="#b4b7bc" stroke-width="1.05" stroke-linejoin="round"/></svg>
<div style="position:absolute;left:60px;top:524.70px;height:16px;line-height:16px;font-size:10px;color:#dfe1e5;white-space:pre;">migrations</div>
<div style="position:absolute;left:58.5px;top:540.3000000000001px;height:12px;line-height:12px;font-size:7px;font-style:italic;color:#6f8de0;font-weight:bold;">php</div>
<div style="position:absolute;left:72.5px;top:539.10px;height:16px;line-height:16px;font-size:10px;color:#dfe1e5;white-space:pre;letter-spacing:-0.42px;">2014_10_12_000000_create_users_table.php</div>
<div style="position:absolute;left:58.5px;top:554.7px;height:12px;line-height:12px;font-size:7px;font-style:italic;color:#6f8de0;font-weight:bold;">php</div>
<div style="position:absolute;left:72.5px;top:553.50px;height:16px;line-height:16px;font-size:10px;color:#dfe1e5;white-space:pre;letter-spacing:-0.42px;">2014_10_12_100000_create_password_reset_tokens_table.php</div>
<div style="position:absolute;left:58.5px;top:569.1px;height:12px;line-height:12px;font-size:7px;font-style:italic;color:#6f8de0;font-weight:bold;">php</div>
<div style="position:absolute;left:72.5px;top:567.90px;height:16px;line-height:16px;font-size:10px;color:#dfe1e5;white-space:pre;letter-spacing:-0.42px;">2014_10_12_100000_create_password_resets_table.php</div>
<div style="position:absolute;left:58.5px;top:583.5px;height:12px;line-height:12px;font-size:7px;font-style:italic;color:#6f8de0;font-weight:bold;">php</div>
<div style="position:absolute;left:72.5px;top:582.30px;height:16px;line-height:16px;font-size:10px;color:#dfe1e5;white-space:pre;letter-spacing:-0.42px;">2019_08_19_000000_create_failed_jobs_table.php</div>
</div>
<div style="position:absolute;left:92px;top:693px;width:176px;height:5px;background:#4c4e52;border-radius:2px;"></div>
<div style="position:absolute;left:350px;top:76px;width:1px;height:624px;background:#1f2023;"></div>
<div style="position:absolute;left:351px;top:76px;width:837px;height:27px;background:#1f2023;"></div>
<div style="position:absolute;left:351px;top:103px;width:837px;height:1px;background:#2b2d30;"></div>
<svg style="position:absolute;left:359px;top:84px;" width="12" height="12" viewBox="0 0 12 12" fill="none"><rect x="3.5" y="0.5" width="4.5" height="4" fill="#6f8fc0"/><rect x="4.3" y="1.3" width="2.9" height="1" fill="#e8eef8"/><path d="M0.5 5.5h11v6h-11z" fill="#e0622e"/><path d="M0.5 8.5h11M4 5.5v3M8 5.5v3M2 8.5v3M6 8.5v3M10 8.5v3" stroke="#2b2d30" stroke-width="0.7"/></svg>
<div style="position:absolute;left:373px;top:82.30px;height:16px;line-height:16px;font-size:9.75px;color:#d3d5da;white-space:pre;">index.blade.php</div>
<svg style="position:absolute;left:470px;top:84px;" width="12" height="12" viewBox="0 0 12 12" fill="none"><rect x="3.5" y="0.5" width="4.5" height="4" fill="#6f8fc0"/><rect x="4.3" y="1.3" width="2.9" height="1" fill="#e8eef8"/><path d="M0.5 5.5h11v6h-11z" fill="#e0622e"/><path d="M0.5 8.5h11M4 5.5v3M8 5.5v3M2 8.5v3M6 8.5v3M10 8.5v3" stroke="#2b2d30" stroke-width="0.7"/></svg>
<div style="position:absolute;left:485px;top:82.30px;height:16px;line-height:16px;font-size:9.75px;color:#d3d5da;white-space:pre;">post.blade.php</div>
<svg style="position:absolute;left:578px;top:84px;" width="12" height="12" viewBox="0 0 12 12" fill="none"><rect x="3.5" y="0.5" width="4.5" height="4" fill="#6f8fc0"/><rect x="4.3" y="1.3" width="2.9" height="1" fill="#e8eef8"/><path d="M0.5 5.5h11v6h-11z" fill="#e0622e"/><path d="M0.5 8.5h11M4 5.5v3M8 5.5v3M2 8.5v3M6 8.5v3M10 8.5v3" stroke="#2b2d30" stroke-width="0.7"/></svg>
<div style="position:absolute;left:593px;top:82.30px;height:16px;line-height:16px;font-size:9.75px;color:#d3d5da;white-space:pre;">profile-nav.blade.php</div>
<svg style="position:absolute;left:712px;top:84px;" width="11" height="12" viewBox="0 0 11 12" fill="none"><path d="M0.8 0.8h9.4l-0.9 9-3.8 1.5-3.8-1.5z" fill="#3b49bd"/><path d="M3 3.2h5l-.4 5-2.1.8-2.1-.8-.1-1.3M3.3 5.8h4.2" stroke="#dfe3ff" stroke-width="0.8"/></svg>
<div style="position:absolute;left:727.5px;top:82.30px;height:16px;line-height:16px;font-size:9.75px;color:#d3d5da;white-space:pre;">app.css</div>
<svg style="position:absolute;left:790px;top:84.5px;" width="11" height="11" viewBox="0 0 11 11" fill="none"><rect x="0.5" y="0.5" width="10" height="10" rx="1.5" fill="#d6a34f"/><text x="1.6" y="8.6" font-family="Liberation Sans" font-weight="bold" font-size="6" fill="#3a2a10">JS</text></svg>
<div style="position:absolute;left:804px;top:82.30px;height:16px;line-height:16px;font-size:9.75px;color:#d3d5da;white-space:pre;">app.js</div>
<svg style="position:absolute;left:859px;top:84.5px;" width="11" height="11" viewBox="0 0 11 11" fill="none"><rect x="0.5" y="0.5" width="10" height="10" rx="1.5" fill="#d6a34f"/><text x="1.6" y="8.6" font-family="Liberation Sans" font-weight="bold" font-size="6" fill="#3a2a10">JS</text></svg>
<div style="position:absolute;left:872.5px;top:82.30px;height:16px;line-height:16px;font-size:9.75px;color:#d3d5da;white-space:pre;">bootstrap.js</div>
<svg style="position:absolute;left:952px;top:84px;" width="12" height="12" viewBox="0 0 12 12" fill="none"><rect x="3.5" y="0.5" width="4.5" height="4" fill="#6f8fc0"/><rect x="4.3" y="1.3" width="2.9" height="1" fill="#e8eef8"/><path d="M0.5 5.5h11v6h-11z" fill="#e0622e"/><path d="M0.5 8.5h11M4 5.5v3M8 5.5v3M2 8.5v3M6 8.5v3M10 8.5v3" stroke="#2b2d30" stroke-width="0.7"/></svg>
<div style="position:absolute;left:967px;top:82.30px;height:16px;line-height:16px;font-size:9.75px;color:#d3d5da;white-space:pre;">app.blade.php</div>
<svg style="position:absolute;left:1057px;top:84px;" width="12" height="12" viewBox="0 0 12 12" fill="none"><circle cx="6" cy="6" r="5.3" fill="#b35f95"/><path d="M7.5 3c-2-.8-4 .3-3.8 1.6.2 1.2 2.6 1.3 2.6 2.7 0 1.3-2 1.8-2.8.8" stroke="#f6d3e8" stroke-width="0.9"/></svg>
<div style="position:absolute;left:1071px;top:82.30px;height:16px;line-height:16px;font-size:9.75px;color:#d3d5da;white-space:pre;">_variables.scss</div>
<div style="position:absolute;left:946px;top:101px;width:103px;height:2px;background:#6b6e74;"></div>
<svg style="position:absolute;left:1033px;top:85px;" width="10" height="10" viewBox="0 0 10 10" fill="none"><path d="M2.5 2.5l5 5M7.5 2.5l-5 5" stroke="#8d9096" stroke-width="0.85"/></svg>
<svg style="position:absolute;left:1170px;top:82px;" width="8" height="14" viewBox="0 0 8 14" fill="none"><circle cx="4" cy="3" r="0.95" fill="#dfe1e5"/><circle cx="4" cy="7" r="0.95" fill="#dfe1e5"/><circle cx="4" cy="11" r="0.95" fill="#dfe1e5"/></svg>
<div style="position:absolute;left:351px;top:104px;width:837px;height:579px;background:#1e1f22;"></div>
<div style="position:absolute;left:351px;top:538.83px;width:837px;height:15.07px;background:#26282e;"></div>
<div style="position:absolute;left:395.5px;top:553.9px;width:22px;height:15.07px;background:#25272b;"></div>
<div style="position:absolute;left:967.2px;top:147.01px;width:27.5px;height:15.07px;background:#293c40;"></div>
<div style="position:absolute;left:538.2px;top:147.01px;width:247.5px;height:15.07px;background:#2b2d31;"></div>
<div style="position:absolute;left:587.7px;top:177.15px;width:99.0px;height:15.07px;background:#2b2d31;"></div>
<div style="position:absolute;left:598.7px;top:282.64px;width:27.5px;height:15.07px;background:#293c40;"></div>
<div style="position:absolute;left:697.7px;top:282.64px;width:82.5px;height:15.07px;background:#293c40;"></div>
<div style="position:absolute;left:598.7px;top:297.71px;width:27.5px;height:15.07px;background:#293c40;"></div>
<div style="position:absolute;left:697.7px;top:297.71px;width:82.5px;height:15.07px;background:#293c40;"></div>
<div style="position:absolute;left:576.7px;top:327.85px;width:27.5px;height:15.07px;background:#293c40;"></div>
<div style="position:absolute;left:675.7px;top:327.85px;width:93.5px;height:15.07px;background:#293c40;"></div>
<div style="position:absolute;left:598.7px;top:388.13px;width:27.5px;height:15.07px;background:#293c40;"></div>
<div style="position:absolute;left:697.7px;top:388.13px;width:93.5px;height:15.07px;background:#293c40;"></div>
<div style="position:absolute;left:598.7px;top:403.2px;width:27.5px;height:15.07px;background:#293c40;"></div>
<div style="position:absolute;left:697.7px;top:403.2px;width:93.5px;height:15.07px;background:#293c40;"></div>
<div style="position:absolute;left:576.7px;top:433.34px;width:27.5px;height:15.07px;background:#293c40;"></div>
<div style="position:absolute;left:675.7px;top:433.34px;width:82.5px;height:15.07px;background:#293c40;"></div>
<div style="position:absolute;left:477.7px;top:478.55px;width:71.5px;height:15.07px;background:#293c40;"></div>
<div style="position:absolute;left:394px;top:104px;width:1px;height:579px;background:#2f3135;"></div>
<div style="position:absolute;left:416.7px;top:101.8px;width:1px;height:452.1px;background:#2f3135;"></div>
<div style="position:absolute;left:438.7px;top:101.8px;width:1px;height:437.03px;background:#2f3135;"></div>
<div style="position:absolute;left:460.7px;top:116.87px;width:1px;height:120.56px;background:#2f3135;"></div>
<div style="position:absolute;left:482.7px;top:131.94px;width:1px;height:90.42px;background:#2f3135;"></div>
<div style="position:absolute;left:504.7px;top:177.15px;width:1px;height:30.14px;background:#2f3135;"></div>
<div style="position:absolute;left:460.7px;top:282.64px;width:1px;height:60.28px;background:#2f3135;"></div>
<div style="position:absolute;left:482.7px;top:297.71px;width:1px;height:15.07px;background:#2f3135;"></div>
<div style="position:absolute;left:460.7px;top:388.13px;width:1px;height:60.28px;background:#2f3135;"></div>
<div style="position:absolute;left:482.7px;top:403.2px;width:1px;height:15.07px;background:#2f3135;"></div>
<div style="position:absolute;left:460.7px;top:493.62px;width:1px;height:15.07px;background:#2f3135;"></div>
<div style="position:absolute;left:1054px;top:104px;width:1px;height:579px;background:#2b2d30;"></div>
<div class="m" style="position:absolute;left:351px;width:26.8px;text-align:right;top:102.60px;height:15.07px;line-height:15.07px;font-size:9.2px;letter-spacing:-0.1px;color:#4e5157;">210</div>
<div class="m" style="position:absolute;left:351px;width:26.8px;text-align:right;top:117.67px;height:15.07px;line-height:15.07px;font-size:9.2px;letter-spacing:-0.1px;color:#4e5157;">211</div>
<div class="m" style="position:absolute;left:351px;width:26.8px;text-align:right;top:132.74px;height:15.07px;line-height:15.07px;font-size:9.2px;letter-spacing:-0.1px;color:#4e5157;">212</div>
<div class="m" style="position:absolute;left:351px;width:26.8px;text-align:right;top:147.81px;height:15.07px;line-height:15.07px;font-size:9.2px;letter-spacing:-0.1px;color:#4e5157;">213</div>
<div class="m" style="position:absolute;left:351px;width:26.8px;text-align:right;top:162.88px;height:15.07px;line-height:15.07px;font-size:9.2px;letter-spacing:-0.1px;color:#4e5157;">214</div>
<div class="m" style="position:absolute;left:351px;width:26.8px;text-align:right;top:177.95px;height:15.07px;line-height:15.07px;font-size:9.2px;letter-spacing:-0.1px;color:#4e5157;">215</div>
<div class="m" style="position:absolute;left:351px;width:26.8px;text-align:right;top:193.02px;height:15.07px;line-height:15.07px;font-size:9.2px;letter-spacing:-0.1px;color:#4e5157;">216</div>
<div class="m" style="position:absolute;left:351px;width:26.8px;text-align:right;top:208.09px;height:15.07px;line-height:15.07px;font-size:9.2px;letter-spacing:-0.1px;color:#4e5157;">217</div>
<div class="m" style="position:absolute;left:351px;width:26.8px;text-align:right;top:223.16px;height:15.07px;line-height:15.07px;font-size:9.2px;letter-spacing:-0.1px;color:#4e5157;">218</div>
<div class="m" style="position:absolute;left:351px;width:26.8px;text-align:right;top:238.23px;height:15.07px;line-height:15.07px;font-size:9.2px;letter-spacing:-0.1px;color:#4e5157;">219</div>
<div class="m" style="position:absolute;left:351px;width:26.8px;text-align:right;top:253.30px;height:15.07px;line-height:15.07px;font-size:9.2px;letter-spacing:-0.1px;color:#4e5157;">220</div>
<div class="m" style="position:absolute;left:351px;width:26.8px;text-align:right;top:268.37px;height:15.07px;line-height:15.07px;font-size:9.2px;letter-spacing:-0.1px;color:#4e5157;">221</div>
<div class="m" style="position:absolute;left:351px;width:26.8px;text-align:right;top:283.44px;height:15.07px;line-height:15.07px;font-size:9.2px;letter-spacing:-0.1px;color:#4e5157;">222</div>
<div class="m" style="position:absolute;left:351px;width:26.8px;text-align:right;top:298.51px;height:15.07px;line-height:15.07px;font-size:9.2px;letter-spacing:-0.1px;color:#4e5157;">223</div>
<div class="m" style="position:absolute;left:351px;width:26.8px;text-align:right;top:313.58px;height:15.07px;line-height:15.07px;font-size:9.2px;letter-spacing:-0.1px;color:#4e5157;">224</div>
<div class="m" style="position:absolute;left:351px;width:26.8px;text-align:right;top:328.65px;height:15.07px;line-height:15.07px;font-size:9.2px;letter-spacing:-0.1px;color:#4e5157;">225</div>
<div class="m" style="position:absolute;left:351px;width:26.8px;text-align:right;top:343.72px;height:15.07px;line-height:15.07px;font-size:9.2px;letter-spacing:-0.1px;color:#4e5157;">226</div>
<div class="m" style="position:absolute;left:351px;width:26.8px;text-align:right;top:358.79px;height:15.07px;line-height:15.07px;font-size:9.2px;letter-spacing:-0.1px;color:#4e5157;">227</div>
<div class="m" style="position:absolute;left:351px;width:26.8px;text-align:right;top:373.86px;height:15.07px;line-height:15.07px;font-size:9.2px;letter-spacing:-0.1px;color:#4e5157;">228</div>
<div class="m" style="position:absolute;left:351px;width:26.8px;text-align:right;top:388.93px;height:15.07px;line-height:15.07px;font-size:9.2px;letter-spacing:-0.1px;color:#4e5157;">229</div>
<div class="m" style="position:absolute;left:351px;width:26.8px;text-align:right;top:404.00px;height:15.07px;line-height:15.07px;font-size:9.2px;letter-spacing:-0.1px;color:#4e5157;">230</div>
<div class="m" style="position:absolute;left:351px;width:26.8px;text-align:right;top:419.07px;height:15.07px;line-height:15.07px;font-size:9.2px;letter-spacing:-0.1px;color:#4e5157;">231</div>
<div class="m" style="position:absolute;left:351px;width:26.8px;text-align:right;top:434.14px;height:15.07px;line-height:15.07px;font-size:9.2px;letter-spacing:-0.1px;color:#4e5157;">232</div>
<div class="m" style="position:absolute;left:351px;width:26.8px;text-align:right;top:449.21px;height:15.07px;line-height:15.07px;font-size:9.2px;letter-spacing:-0.1px;color:#4e5157;">233</div>
<div class="m" style="position:absolute;left:351px;width:26.8px;text-align:right;top:464.28px;height:15.07px;line-height:15.07px;font-size:9.2px;letter-spacing:-0.1px;color:#4e5157;">234</div>
<div class="m" style="position:absolute;left:351px;width:26.8px;text-align:right;top:479.35px;height:15.07px;line-height:15.07px;font-size:9.2px;letter-spacing:-0.1px;color:#4e5157;">235</div>
<div class="m" style="position:absolute;left:351px;width:26.8px;text-align:right;top:494.42px;height:15.07px;line-height:15.07px;font-size:9.2px;letter-spacing:-0.1px;color:#4e5157;">236</div>
<div class="m" style="position:absolute;left:351px;width:26.8px;text-align:right;top:509.49px;height:15.07px;line-height:15.07px;font-size:9.2px;letter-spacing:-0.1px;color:#4e5157;">237</div>
<div class="m" style="position:absolute;left:351px;width:26.8px;text-align:right;top:524.56px;height:15.07px;line-height:15.07px;font-size:9.2px;letter-spacing:-0.1px;color:#4e5157;">238</div>
<div class="m" style="position:absolute;left:351px;width:26.8px;text-align:right;top:539.63px;height:15.07px;line-height:15.07px;font-size:9.2px;letter-spacing:-0.1px;color:#a9abb1;">239</div>
<div class="m" style="position:absolute;left:351px;width:26.8px;text-align:right;top:554.70px;height:15.07px;line-height:15.07px;font-size:9.2px;letter-spacing:-0.1px;color:#4e5157;">240</div>
<div class="m" style="position:absolute;left:351px;width:26.8px;text-align:right;top:569.77px;height:15.07px;line-height:15.07px;font-size:9.2px;letter-spacing:-0.1px;color:#4e5157;">241</div>
<div class="m" style="position:absolute;left:351px;width:26.8px;text-align:right;top:584.84px;height:15.07px;line-height:15.07px;font-size:9.2px;letter-spacing:-0.1px;color:#4e5157;">242</div>
<div class="m" style="position:absolute;left:351px;width:26.8px;text-align:right;top:599.91px;height:15.07px;line-height:15.07px;font-size:9.2px;letter-spacing:-0.1px;color:#4e5157;">243</div>
<div class="m" style="position:absolute;left:395.2px;top:102.60px;height:15.07px;line-height:15.07px;font-size:9.6px;letter-spacing:-0.26px;-webkit-text-stroke:0.15px currentColor;white-space:pre;"><span style="color:#c4c6cb">            </span><span style="color:#c77fbd">$</span><span style="color:#c4c6cb">(</span><span style="color:#c6a0c4;font-style:italic">document</span><span style="color:#c4c6cb">).</span><span style="color:#7fa9df">on</span><span style="color:#c4c6cb">(</span><span style="color:#92b68f">&#x27;click&#x27;</span><span style="color:#c4c6cb">, </span><span style="color:#92b68f">&#x27;.like,.dislike,.love,.hate&#x27;</span><span style="color:#c4c6cb">, </span><span style="color:#d0a07f">function</span><span style="color:#c4c6cb">() {</span></div>
<div class="m" style="position:absolute;left:395.2px;top:117.67px;height:15.07px;line-height:15.07px;font-size:9.6px;letter-spacing:-0.26px;-webkit-text-stroke:0.15px currentColor;white-space:pre;"><span style="color:#c4c6cb">                </span><span style="color:#c77fbd">$</span><span style="color:#c4c6cb">.</span><span style="color:#7fa9df">ajax</span><span style="color:#c4c6cb">({</span></div>
<div class="m" style="position:absolute;left:395.2px;top:132.74px;height:15.07px;line-height:15.07px;font-size:9.6px;letter-spacing:-0.26px;-webkit-text-stroke:0.15px currentColor;white-space:pre;"><span style="color:#c4c6cb">                    </span><span style="color:#c99cc2">method</span><span style="color:#c4c6cb">: </span><span style="color:#92b68f">&#x27;POST&#x27;</span><span style="color:#c4c6cb">,</span></div>
<div class="m" style="position:absolute;left:395.2px;top:147.81px;height:15.07px;line-height:15.07px;font-size:9.6px;letter-spacing:-0.26px;-webkit-text-stroke:0.15px currentColor;white-space:pre;"><span style="color:#c4c6cb">                    </span><span style="color:#c99cc2">url</span><span style="color:#c4c6cb">: </span><span style="color:#92b68f">&#x27;</span><span style="color:#c4c6cb">{{ </span><span style="color:#7fa9df">route</span><span style="color:#c4c6cb">(</span><span style="color:#92b68f">&#x27;postReaction&#x27;</span><span style="color:#c4c6cb">, [</span><span style="color:#92b68f">&#x27;post&#x27;</span><span style="color:#c4c6cb"> =&gt; </span><span style="color:#92b68f">&#x27;ID&#x27;</span><span style="color:#c4c6cb">]) }}</span><span style="color:#92b68f">&#x27;</span><span style="color:#c4c6cb">.</span><span style="color:#7fa9df">replace</span><span style="color:#c4c6cb">(</span><span style="color:#92b68f">&#x27;ID&#x27;</span><span style="color:#c4c6cb">, </span><span style="color:#c77fbd">$</span><span style="color:#c4c6cb">(</span><span style="color:#d3ad90">this</span><span style="color:#c4c6cb">).</span><span style="color:#7fa9df">parents</span><span style="color:#c4c6cb">(</span><span style="color:#92b68f">&#x27;</span><span style="color:#d5d9c0">.card</span><span style="color:#92b68f">&#x27;</span><span style="color:#c4c6cb">).</span><span style="color:#7fa9df">data</span><span style="color:#c4c6cb">(</span><span style="color:#92b68f">&#x27;post-id&#x27;</span><span style="color:#c4c6cb">)),</span></div>
<div class="m" style="position:absolute;left:395.2px;top:162.88px;height:15.07px;line-height:15.07px;font-size:9.6px;letter-spacing:-0.26px;-webkit-text-stroke:0.15px currentColor;white-space:pre;"><span style="color:#c4c6cb">                    </span><span style="color:#c99cc2">data</span><span style="color:#c4c6cb">: {</span></div>
<div class="m" style="position:absolute;left:395.2px;top:177.95px;height:15.07px;line-height:15.07px;font-size:9.6px;letter-spacing:-0.26px;-webkit-text-stroke:0.15px currentColor;white-space:pre;"><span style="color:#c4c6cb">                        </span><span style="color:#92b68f">&quot;_token&quot;</span><span style="color:#c4c6cb">: </span><span style="color:#92b68f">&quot;</span><span style="color:#c4c6cb">{{ </span><span style="color:#7fa9df">csrf_token</span><span style="color:#c4c6cb">() }}</span><span style="color:#92b68f">&quot;</span><span style="color:#c4c6cb">,</span></div>
<div class="m" style="position:absolute;left:395.2px;top:193.02px;height:15.07px;line-height:15.07px;font-size:9.6px;letter-spacing:-0.26px;-webkit-text-stroke:0.15px currentColor;white-space:pre;"><span style="color:#c4c6cb">                        </span><span style="color:#92b68f">&quot;expression&quot;</span><span style="color:#c4c6cb">: </span><span style="color:#c77fbd">$</span><span style="color:#c4c6cb">(</span><span style="color:#d3ad90">this</span><span style="color:#c4c6cb">).</span><span style="color:#7fa9df">data</span><span style="color:#c4c6cb">(</span><span style="color:#92b68f">&#x27;expression&#x27;</span><span style="color:#c4c6cb">),</span></div>
<div class="m" style="position:absolute;left:395.2px;top:208.09px;height:15.07px;line-height:15.07px;font-size:9.6px;letter-spacing:-0.26px;-webkit-text-stroke:0.15px currentColor;white-space:pre;"><span style="color:#c4c6cb">                    </span><span style="color:#c4c6cb">}</span></div>
<div class="m" style="position:absolute;left:395.2px;top:223.16px;height:15.07px;line-height:15.07px;font-size:9.6px;letter-spacing:-0.26px;-webkit-text-stroke:0.15px currentColor;white-space:pre;"><span style="color:#c4c6cb">                </span><span style="color:#c4c6cb">})</span></div>
<div class="m" style="position:absolute;left:395.2px;top:238.23px;height:15.07px;line-height:15.07px;font-size:9.6px;letter-spacing:-0.26px;-webkit-text-stroke:0.15px currentColor;white-space:pre;"><span style="color:#c4c6cb">            </span><span style="color:#c4c6cb">});</span></div>
<div class="m" style="position:absolute;left:395.2px;top:268.37px;height:15.07px;line-height:15.07px;font-size:9.6px;letter-spacing:-0.26px;-webkit-text-stroke:0.15px currentColor;white-space:pre;"><span style="color:#c4c6cb">            </span><span style="color:#c77fbd">$</span><span style="color:#c4c6cb">(</span><span style="color:#c6a0c4;font-style:italic">document</span><span style="color:#c4c6cb">).</span><span style="color:#7fa9df">on</span><span style="color:#c4c6cb">(</span><span style="color:#92b68f">&#x27;click&#x27;</span><span style="color:#c4c6cb">, </span><span style="color:#92b68f">&#x27;.reply&#x27;</span><span style="color:#c4c6cb">, </span><span style="color:#d0a07f">function</span><span style="color:#c4c6cb">() {</span></div>
<div class="m" style="position:absolute;left:395.2px;top:283.44px;height:15.07px;line-height:15.07px;font-size:9.6px;letter-spacing:-0.26px;-webkit-text-stroke:0.15px currentColor;white-space:pre;"><span style="color:#c4c6cb">                </span><span style="color:#d0a07f">if</span><span style="color:#c4c6cb"> (</span><span style="color:#c77fbd">$</span><span style="color:#c4c6cb">(</span><span style="color:#d3ad90">this</span><span style="color:#c4c6cb">).</span><span style="color:#7fa9df">parents</span><span style="color:#c4c6cb">(</span><span style="color:#92b68f">&#x27;</span><span style="color:#d5d9c0">.card</span><span style="color:#92b68f">&#x27;</span><span style="color:#c4c6cb">).</span><span style="color:#7fa9df">children</span><span style="color:#c4c6cb">(</span><span style="color:#92b68f">&#x27;</span><span style="color:#d5d9c0">.repost-wrapper</span><span style="color:#92b68f">&#x27;</span><span style="color:#c4c6cb">).</span><span style="color:#7fa9df">is</span><span style="color:#c4c6cb">(</span><span style="color:#92b68f">&#x27;:visible&#x27;</span><span style="color:#c4c6cb">)) {</span></div>
<div class="m" style="position:absolute;left:395.2px;top:298.51px;height:15.07px;line-height:15.07px;font-size:9.6px;letter-spacing:-0.26px;-webkit-text-stroke:0.15px currentColor;white-space:pre;"><span style="color:#c4c6cb">                    </span><span style="color:#c77fbd">$</span><span style="color:#c4c6cb">(</span><span style="color:#d3ad90">this</span><span style="color:#c4c6cb">).</span><span style="color:#7fa9df">parents</span><span style="color:#c4c6cb">(</span><span style="color:#92b68f">&#x27;</span><span style="color:#d5d9c0">.card</span><span style="color:#92b68f">&#x27;</span><span style="color:#c4c6cb">).</span><span style="color:#7fa9df">children</span><span style="color:#c4c6cb">(</span><span style="color:#92b68f">&#x27;</span><span style="color:#d5d9c0">.repost-wrapper</span><span style="color:#92b68f">&#x27;</span><span style="color:#c4c6cb">).</span><span style="color:#7fa9df">hide</span><span style="color:#c4c6cb">();</span></div>
<div class="m" style="position:absolute;left:395.2px;top:313.58px;height:15.07px;line-height:15.07px;font-size:9.6px;letter-spacing:-0.26px;-webkit-text-stroke:0.15px currentColor;white-space:pre;"><span style="color:#c4c6cb">                </span><span style="color:#c4c6cb">}</span></div>
<div class="m" style="position:absolute;left:395.2px;top:328.65px;height:15.07px;line-height:15.07px;font-size:9.6px;letter-spacing:-0.26px;-webkit-text-stroke:0.15px currentColor;white-space:pre;"><span style="color:#c4c6cb">                </span><span style="color:#c77fbd">$</span><span style="color:#c4c6cb">(</span><span style="color:#d3ad90">this</span><span style="color:#c4c6cb">).</span><span style="color:#7fa9df">parents</span><span style="color:#c4c6cb">(</span><span style="color:#92b68f">&#x27;</span><span style="color:#d5d9c0">.card</span><span style="color:#92b68f">&#x27;</span><span style="color:#c4c6cb">).</span><span style="color:#7fa9df">children</span><span style="color:#c4c6cb">(</span><span style="color:#92b68f">&#x27;</span><span style="color:#d5d9c0">.response-wrapper</span><span style="color:#92b68f">&#x27;</span><span style="color:#c4c6cb">).</span><span style="color:#c79dca">slideToggle</span><span style="color:#c4c6cb">();</span></div>
<div class="m" style="position:absolute;left:395.2px;top:343.72px;height:15.07px;line-height:15.07px;font-size:9.6px;letter-spacing:-0.26px;-webkit-text-stroke:0.15px currentColor;white-space:pre;"><span style="color:#c4c6cb">            </span><span style="color:#c4c6cb">});</span></div>
<div class="m" style="position:absolute;left:395.2px;top:373.86px;height:15.07px;line-height:15.07px;font-size:9.6px;letter-spacing:-0.26px;-webkit-text-stroke:0.15px currentColor;white-space:pre;"><span style="color:#c4c6cb">            </span><span style="color:#c77fbd">$</span><span style="color:#c4c6cb">(</span><span style="color:#c6a0c4;font-style:italic">document</span><span style="color:#c4c6cb">).</span><span style="color:#7fa9df">on</span><span style="color:#c4c6cb">(</span><span style="color:#92b68f">&#x27;click&#x27;</span><span style="color:#c4c6cb">, </span><span style="color:#92b68f">&#x27;.repost&#x27;</span><span style="color:#c4c6cb">, </span><span style="color:#d0a07f">function</span><span style="color:#c4c6cb">() {</span></div>
<div class="m" style="position:absolute;left:395.2px;top:388.93px;height:15.07px;line-height:15.07px;font-size:9.6px;letter-spacing:-0.26px;-webkit-text-stroke:0.15px currentColor;white-space:pre;"><span style="color:#c4c6cb">                </span><span style="color:#d0a07f">if</span><span style="color:#c4c6cb"> (</span><span style="color:#c77fbd">$</span><span style="color:#c4c6cb">(</span><span style="color:#d3ad90">this</span><span style="color:#c4c6cb">).</span><span style="color:#7fa9df">parents</span><span style="color:#c4c6cb">(</span><span style="color:#92b68f">&#x27;</span><span style="color:#d5d9c0">.card</span><span style="color:#92b68f">&#x27;</span><span style="color:#c4c6cb">).</span><span style="color:#7fa9df">children</span><span style="color:#c4c6cb">(</span><span style="color:#92b68f">&#x27;</span><span style="color:#d5d9c0">.response-wrapper</span><span style="color:#92b68f">&#x27;</span><span style="color:#c4c6cb">).</span><span style="color:#7fa9df">is</span><span style="color:#c4c6cb">(</span><span style="color:#92b68f">&#x27;:visible&#x27;</span><span style="color:#c4c6cb">)) {</span></div>
<div class="m" style="position:absolute;left:395.2px;top:404.00px;height:15.07px;line-height:15.07px;font-size:9.6px;letter-spacing:-0.26px;-webkit-text-stroke:0.15px currentColor;white-space:pre;"><span style="color:#c4c6cb">                    </span><span style="color:#c77fbd">$</span><span style="color:#c4c6cb">(</span><span style="color:#d3ad90">this</span><span style="color:#c4c6cb">).</span><span style="color:#7fa9df">parents</span><span style="color:#c4c6cb">(</span><span style="color:#92b68f">&#x27;</span><span style="color:#d5d9c0">.card</span><span style="color:#92b68f">&#x27;</span><span style="color:#c4c6cb">).</span><span style="color:#7fa9df">children</span><span style="color:#c4c6cb">(</span><span style="color:#92b68f">&#x27;</span><span style="color:#d5d9c0">.response-wrapper</span><span style="color:#92b68f">&#x27;</span><span style="color:#c4c6cb">).</span><span style="color:#7fa9df">hide</span><span style="color:#c4c6cb">();</span></div>
<div class="m" style="position:absolute;left:395.2px;top:419.07px;height:15.07px;line-height:15.07px;font-size:9.6px;letter-spacing:-0.26px;-webkit-text-stroke:0.15px currentColor;white-space:pre;"><span style="color:#c4c6cb">                </span><span style="color:#c4c6cb">}</span></div>
<div class="m" style="position:absolute;left:395.2px;top:434.14px;height:15.07px;line-height:15.07px;font-size:9.6px;letter-spacing:-0.26px;-webkit-text-stroke:0.15px currentColor;white-space:pre;"><span style="color:#c4c6cb">                </span><span style="color:#c77fbd">$</span><span style="color:#c4c6cb">(</span><span style="color:#d3ad90">this</span><span style="color:#c4c6cb">).</span><span style="color:#7fa9df">parents</span><span style="color:#c4c6cb">(</span><span style="color:#92b68f">&#x27;</span><span style="color:#d5d9c0">.card</span><span style="color:#92b68f">&#x27;</span><span style="color:#c4c6cb">).</span><span style="color:#7fa9df">children</span><span style="color:#c4c6cb">(</span><span style="color:#92b68f">&#x27;</span><span style="color:#d5d9c0">.repost-wrapper</span><span style="color:#92b68f">&#x27;</span><span style="color:#c4c6cb">).</span><span style="color:#c79dca">slideToggle</span><span style="color:#c4c6cb">();</span></div>
<div class="m" style="position:absolute;left:395.2px;top:449.21px;height:15.07px;line-height:15.07px;font-size:9.6px;letter-spacing:-0.26px;-webkit-text-stroke:0.15px currentColor;white-space:pre;"><span style="color:#c4c6cb">            </span><span style="color:#c4c6cb">});</span></div>
<div class="m" style="position:absolute;left:395.2px;top:479.35px;height:15.07px;line-height:15.07px;font-size:9.6px;letter-spacing:-0.26px;-webkit-text-stroke:0.15px currentColor;white-space:pre;"><span style="color:#c4c6cb">            </span><span style="color:#c77fbd">$</span><span style="color:#c4c6cb">(</span><span style="color:#92b68f">&#x27;</span><span style="color:#d5d9c0">#theme-toggle</span><span style="color:#92b68f">&#x27;</span><span style="color:#c4c6cb">).</span><span style="color:#7fa9df">on</span><span style="color:#c4c6cb">(</span><span style="color:#92b68f">&#x27;click&#x27;</span><span style="color:#c4c6cb">, </span><span style="color:#d0a07f">function</span><span style="color:#c4c6cb">() {</span></div>
<div class="m" style="position:absolute;left:395.2px;top:494.42px;height:15.07px;line-height:15.07px;font-size:9.6px;letter-spacing:-0.26px;-webkit-text-stroke:0.15px currentColor;white-space:pre;"><span style="color:#c4c6cb">                </span><span style="color:#7fa9df">reinitTinyMCE</span><span style="color:#c4c6cb">();</span></div>
<div class="m" style="position:absolute;left:395.2px;top:509.49px;height:15.07px;line-height:15.07px;font-size:9.6px;letter-spacing:-0.26px;-webkit-text-stroke:0.15px currentColor;white-space:pre;"><span style="color:#c4c6cb">            </span><span style="color:#c4c6cb">});</span></div>
<div class="m" style="position:absolute;left:395.2px;top:539.63px;height:15.07px;line-height:15.07px;font-size:9.6px;letter-spacing:-0.26px;-webkit-text-stroke:0.15px currentColor;white-space:pre;"><span style="color:#c4c6cb">        </span><span style="color:#cba08a">@endauth</span></div>
<div class="m" style="position:absolute;left:395.2px;top:554.70px;height:15.07px;line-height:15.07px;font-size:9.6px;letter-spacing:-0.26px;-webkit-text-stroke:0.15px currentColor;white-space:pre;"><span style="color:#c4c6cb">    </span><span style="color:#dcd0ae">&lt;/script&gt;</span></div>
<div class="m" style="position:absolute;left:395.2px;top:569.77px;height:15.07px;line-height:15.07px;font-size:9.6px;letter-spacing:-0.26px;-webkit-text-stroke:0.15px currentColor;white-space:pre;"><span style="color:#dcd0ae">&lt;/body&gt;</span></div>
<div class="m" style="position:absolute;left:395.2px;top:584.84px;height:15.07px;line-height:15.07px;font-size:9.6px;letter-spacing:-0.26px;-webkit-text-stroke:0.15px currentColor;white-space:pre;"><span style="color:#dcd0ae">&lt;/html&gt;</span></div>
<svg style="position:absolute;left:461.2px;top:491.15px;" width="100" height="3" viewBox="0 0 100 3" fill="none"><path d="M0 2.2 l1.5 -1.6 l1.5 1.6" stroke="#c2ad74" stroke-width="0.85"/><path d="M3 2.2 l1.5 -1.6 l1.5 1.6" stroke="#c2ad74" stroke-width="0.85"/><path d="M6 2.2 l1.5 -1.6 l1.5 1.6" stroke="#c2ad74" stroke-width="0.85"/><path d="M9 2.2 l1.5 -1.6 l1.5 1.6" stroke="#c2ad74" stroke-width="0.85"/><path d="M12 2.2 l1.5 -1.6 l1.5 1.6" stroke="#c2ad74" stroke-width="0.85"/><path d="M15 2.2 l1.5 -1.6 l1.5 1.6" stroke="#c2ad74" stroke-width="0.85"/><path d="M18 2.2 l1.5 -1.6 l1.5 1.6" stroke="#c2ad74" stroke-width="0.85"/><path d="M21 2.2 l1.5 -1.6 l1.5 1.6" stroke="#c2ad74" stroke-width="0.85"/><path d="M24 2.2 l1.5 -1.6 l1.5 1.6" stroke="#c2ad74" stroke-width="0.85"/><path d="M27 2.2 l1.5 -1.6 l1.5 1.6" stroke="#c2ad74" stroke-width="0.85"/><path d="M30 2.2 l1.5 -1.6 l1.5 1.6" stroke="#c2ad74" stroke-width="0.85"/><path d="M33 2.2 l1.5 -1.6 l1.5 1.6" stroke="#c2ad74" stroke-width="0.85"/><path d="M36 2.2 l1.5 -1.6 l1.5 1.6" stroke="#c2ad74" stroke-width="0.85"/><path d="M39 2.2 l1.5 -1.6 l1.5 1.6" stroke="#c2ad74" stroke-width="0.85"/><path d="M42 2.2 l1.5 -1.6 l1.5 1.6" stroke="#c2ad74" stroke-width="0.85"/><path d="M45 2.2 l1.5 -1.6 l1.5 1.6" stroke="#c2ad74" stroke-width="0.85"/><path d="M48 2.2 l1.5 -1.6 l1.5 1.6" stroke="#c2ad74" stroke-width="0.85"/><path d="M51 2.2 l1.5 -1.6 l1.5 1.6" stroke="#c2ad74" stroke-width="0.85"/><path d="M54 2.2 l1.5 -1.6 l1.5 1.6" stroke="#c2ad74" stroke-width="0.85"/><path d="M57 2.2 l1.5 -1.6 l1.5 1.6" stroke="#c2ad74" stroke-width="0.85"/><path d="M60 2.2 l1.5 -1.6 l1.5 1.6" stroke="#c2ad74" stroke-width="0.85"/><path d="M63 2.2 l1.5 -1.6 l1.5 1.6" stroke="#c2ad74" stroke-width="0.85"/><path d="M66 2.2 l1.5 -1.6 l1.5 1.6" stroke="#c2ad74" stroke-width="0.85"/><path d="M69 2.2 l1.5 -1.6 l1.5 1.6" stroke="#c2ad74" stroke-width="0.85"/><path d="M72 2.2 l1.5 -1.6 l1.5 1.6" stroke="#c2ad74" stroke-width="0.85"/><path d="M75 2.2 l1.5 -1.6 l1.5 1.6" stroke="#c2ad74" stroke-width="0.85"/><path d="M78 2.2 l1.5 -1.6 l1.5 1.6" stroke="#c2ad74" stroke-width="0.85"/><path d="M81 2.2 l1.5 -1.6 l1.5 1.6" stroke="#c2ad74" stroke-width="0.85"/><path d="M84 2.2 l1.5 -1.6 l1.5 1.6" stroke="#c2ad74" stroke-width="0.85"/><path d="M87 2.2 l1.5 -1.6 l1.5 1.6" stroke="#c2ad74" stroke-width="0.85"/><path d="M90 2.2 l1.5 -1.6 l1.5 1.6" stroke="#c2ad74" stroke-width="0.85"/><path d="M93 2.2 l1.5 -1.6 l1.5 1.6" stroke="#c2ad74" stroke-width="0.85"/><path d="M96 2.2 l1.5 -1.6 l1.5 1.6" stroke="#c2ad74" stroke-width="0.85"/></svg>
<svg style="position:absolute;left:1093px;top:107px;" width="10" height="10" viewBox="0 0 10 10" fill="none"><path d="M5 0.8l4.4 8.2H0.6z" fill="#e7c25a"/><path d="M5 3.4v2.8" stroke="#2b2b2b" stroke-width="1"/><circle cx="5" cy="7.5" r="0.55" fill="#2b2b2b"/></svg>
<div style="position:absolute;left:1104.6px;top:104.30px;height:16px;line-height:16px;font-size:8.8px;color:#a3a6ab;white-space:pre;">17</div>
<svg style="position:absolute;left:1116px;top:107px;" width="10" height="10" viewBox="0 0 10 10" fill="none"><path d="M5 0.8l4.4 8.2H0.6z" fill="#b79c6e"/><path d="M5 3.4v2.8" stroke="#2b2b2b" stroke-width="1"/><circle cx="5" cy="7.5" r="0.55" fill="#2b2b2b"/></svg>
<div style="position:absolute;left:1127.6px;top:104.30px;height:16px;line-height:16px;font-size:8.8px;color:#a3a6ab;white-space:pre;">11</div>
<svg style="position:absolute;left:1139px;top:106px;" width="11" height="12" viewBox="0 0 11 12" fill="none"><path d="M1.2 5.8l2.8 2.8 5.4-6" stroke="#5fb865" stroke-width="1.3"/><path d="M1 10.5q1-1 2 0t2 0 2 0 2 0" stroke="#5fb865" stroke-width="0.7"/></svg>
<div style="position:absolute;left:1150.6px;top:104.30px;height:16px;line-height:16px;font-size:8.8px;color:#a3a6ab;white-space:pre;">3</div>
<svg style="position:absolute;left:1161px;top:108.5px;" width="8" height="8" viewBox="0 0 8 8" fill="none"><path d="M1.2 5.2l2.8-2.8 2.8 2.8" stroke="#c4c6cb" stroke-width="1.15"/></svg>
<svg style="position:absolute;left:1176px;top:108.5px;" width="8" height="8" viewBox="0 0 8 8" fill="none"><path d="M1.2 2.8l2.8 2.8 2.8-2.8" stroke="#c4c6cb" stroke-width="1.15"/></svg>
<div style="position:absolute;left:1178px;top:162px;width:10px;height:1px;background:#dcae52;"></div>
<div style="position:absolute;left:1178px;top:165px;width:10px;height:1px;background:#dcae52;"></div>
<div style="position:absolute;left:1178px;top:168px;width:10px;height:1px;background:#dcae52;"></div>
<div style="position:absolute;left:1178px;top:171px;width:10px;height:1px;background:#dcae52;"></div>
<div style="position:absolute;left:1178px;top:255px;width:10px;height:1px;background:#dcae52;"></div>
<div style="position:absolute;left:1178px;top:354px;width:10px;height:1px;background:#dcae52;"></div>
<div style="position:absolute;left:1178px;top:357px;width:10px;height:1px;background:#dcae52;"></div>
<div style="position:absolute;left:1178px;top:374px;width:10px;height:1px;background:#dcae52;"></div>
<div style="position:absolute;left:1178px;top:377px;width:10px;height:1px;background:#dcae52;"></div>
<div style="position:absolute;left:1178px;top:485px;width:10px;height:1px;background:#dcae52;"></div>
<div style="position:absolute;left:1178px;top:487.5px;width:10px;height:1px;background:#dcae52;"></div>
<div style="position:absolute;left:1178px;top:494.5px;width:10px;height:1px;background:#dcae52;"></div>
<div style="position:absolute;left:1178px;top:497px;width:10px;height:1px;background:#dcae52;"></div>
<div style="position:absolute;left:1178px;top:505.5px;width:10px;height:1px;background:#dcae52;"></div>
<div style="position:absolute;left:1178px;top:508px;width:10px;height:1px;background:#dcae52;"></div>
<div style="position:absolute;left:1181px;top:594px;width:6px;height:86px;background:#4a4c50;border-radius:3px;"></div>
<div style="position:absolute;left:1178px;top:649.5px;width:10px;height:1px;background:#dcae52;"></div>
<div style="position:absolute;left:397px;top:677px;width:398px;height:5px;background:#4a4c50;border-radius:2.5px;"></div>
<div style="position:absolute;left:1188px;top:76px;width:28px;height:624px;background:#2b2d30;"></div>
<div style="position:absolute;left:1188px;top:76px;width:1px;height:624px;background:#1f2023;"></div>
<svg style="position:absolute;left:1195px;top:81px;" width="15" height="15" viewBox="0 0 15 15" fill="none"><path d="M3 10.5V6.5a4 4 0 0 1 8 0v4l1.3 1.3H1.7z" stroke="#ced0d6" stroke-width="1.1" stroke-linejoin="round"/><path d="M5.5 13.3a1.6 1.6 0 0 0 3 0" stroke="#ced0d6" stroke-width="1.1"/><circle cx="11.8" cy="3.2" r="2.9" fill="#2b2d30"/><circle cx="11.8" cy="3.2" r="2.2" fill="#5b82d8"/></svg>
<svg style="position:absolute;left:1195px;top:109px;" width="15" height="15" viewBox="0 0 15 15" fill="none"><ellipse cx="7.5" cy="3.3" rx="5" ry="2" stroke="#ced0d6" stroke-width="1.1"/><path d="M2.5 3.3v8.4c0 1.1 2.2 2 5 2s5-.9 5-2V3.3M2.5 6.1c0 1.1 2.2 2 5 2s5-.9 5-2M2.5 8.9c0 1.1 2.2 2 5 2s5-.9 5-2" stroke="#ced0d6" stroke-width="1.1"/></svg>
<div style="position:absolute;left:1194px;top:133.5px;width:16px;height:1px;background:#3c3e43;"></div>
<svg style="position:absolute;left:1195px;top:144px;" width="15" height="15" viewBox="0 0 15 15" fill="none"><path d="M1.6 13.2V2.2h2.5l3.4 4.2 3.4-4.2h2.5v11h-2.5V6.6L7.5 10.4 4.1 6.6v6.6z" stroke="#ced0d6" stroke-width="1.05" stroke-linejoin="round"/></svg>
<div style="position:absolute;left:351px;top:683px;width:837px;height:1px;background:#2b2d30;"></div>
<div style="position:absolute;left:351px;top:684px;width:837px;height:16px;background:#1e1f22;"></div>
<div style="position:absolute;left:357px;top:683.50px;height:16px;line-height:16px;font-size:10px;color:#a0a3a8;white-space:pre;">html</div>
<svg style="position:absolute;left:381px;top:687.5px;" width="6" height="8" viewBox="0 0 6 8" fill="none"><path d="M1.5 1l2.8 3-2.8 3" stroke="#6e7176" stroke-width="0.9"/></svg>
<div style="position:absolute;left:392px;top:683.50px;height:16px;line-height:16px;font-size:10px;color:#a0a3a8;white-space:pre;">body</div>
<svg style="position:absolute;left:419px;top:687.5px;" width="6" height="8" viewBox="0 0 6 8" fill="none"><path d="M1.5 1l2.8 3-2.8 3" stroke="#6e7176" stroke-width="0.9"/></svg>
<div style="position:absolute;left:430px;top:683.50px;height:16px;line-height:16px;font-size:10px;color:#a0a3a8;white-space:pre;">script</div>
<div style="position:absolute;left:64px;top:700px;width:1152px;height:20px;background:#2b2d30;"></div>
<div style="position:absolute;left:64px;top:700px;width:1152px;height:1px;background:#1f2023;"></div>
<div style="position:absolute;left:74.5px;top:701.50px;height:16px;line-height:16px;font-size:9.82px;color:#a6a9ae;white-space:pre;">Laravel query now allows you to configure which schemas to inspect and reduce the noise! // Configure // Ignore (35 minutes ago)</div>
<div style="position:absolute;left:965px;top:701.50px;height:16px;line-height:16px;font-size:9.6px;color:#a6a9ae;white-space:pre;">PHP: 8.1</div>
<div style="position:absolute;left:1012px;top:701.50px;height:16px;line-height:16px;font-size:9.6px;color:#a6a9ae;white-space:pre;">239:17</div>
<div style="position:absolute;left:1050.5px;top:701.50px;height:16px;line-height:16px;font-size:9.6px;color:#a6a9ae;white-space:pre;">LF</div>
<div style="position:absolute;left:1071.5px;top:701.50px;height:16px;line-height:16px;font-size:9.6px;color:#a6a9ae;white-space:pre;">UTF-8</div>
<svg style="position:absolute;left:1110px;top:702px;" width="12" height="13" viewBox="0 0 12 13" fill="none"><path d="M3.5 6a2.5 2.5 0 0 1 5 0v2.5a2.5 2.5 0 0 1-5 0z" stroke="#c9cbd0" stroke-width="1"/><path d="M1.3 6.5h2.2M1.3 9h2.2M8.5 6.5h2.2M8.5 9h2.2M2 4l1.5 1.3M2 12l1.5-1.3M10 12l-1.5-1.3" stroke="#c9cbd0" stroke-width="0.9"/><path d="M8.5 0.8l2.6 2.6M11.1 0.8l-2.6 2.6" stroke="#e35a5a" stroke-width="0.9"/></svg>
<div style="position:absolute;left:1132.5px;top:701.50px;height:16px;line-height:16px;font-size:9.6px;color:#a6a9ae;white-space:pre;">4 spaces</div>
<svg style="position:absolute;left:1173px;top:703px;" width="11" height="13" viewBox="0 0 11 13" fill="none"><path d="M2 11.5V2.5h4.2l2.3 2.3V6" stroke="#c9cbd0" stroke-width="1"/><circle cx="7.5" cy="9.5" r="2.4" stroke="#c9cbd0" stroke-width="1"/><path d="M6 10.9l3-2.8" stroke="#c9cbd0" stroke-width="0.9"/></svg>
<svg style="position:absolute;left:1194px;top:703px;" width="13" height="13" viewBox="0 0 13 13" fill="none"><rect x="1.5" y="6" width="7.5" height="5.5" rx="1" stroke="#c9cbd0" stroke-width="1"/><path d="M7 6V4a2.2 2.2 0 0 1 4.4 0v1" stroke="#c9cbd0" stroke-width="1"/></svg>
</body></html>
